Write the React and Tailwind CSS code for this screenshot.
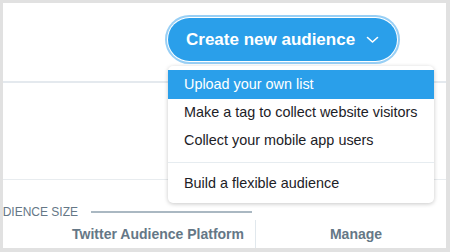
import React from 'react';

const menuItems = [
  { label: 'Upload your own list', active: true },
  { label: 'Make a tag to collect website visitors' },
  { label: 'Collect your mobile app users' },
];

const App = () => {
  return (
    <div className="w-[450px] h-[252px] bg-[#e1e1e1] pt-[3px] pl-[3px] pr-[4px] pb-[4px] font-['Liberation_Sans',Arial,sans-serif]">
      <div className="relative w-full h-full bg-white overflow-hidden flex flex-col">
        {/* Top bar with the button */}
        <div className="h-[80px] shrink-0 border-b-2 border-[#e4e9ee] pl-[165px] pt-[15px]">
          <button className="w-[229px] h-[43px] rounded-full bg-[#2a9fea] ring-2 ring-[#98cff5] ring-offset-1 ring-offset-white flex items-center pl-[18px] text-white text-[17px] font-bold">
            Create new audience
            <svg className="ml-[11px]" width="13" height="8" viewBox="0 0 13 8" fill="none">
              <path d="M1.5 1.5 L6.5 6 L11.5 1.5" stroke="white" strokeWidth="1.6" strokeLinecap="round" strokeLinejoin="round" />
            </svg>
          </button>
        </div>

        <div className="h-[97px] shrink-0 border-b border-[#e8ecef]" />

        {/* Audience size label */}
        <div className="flex items-center pt-[23px] h-[40px] shrink-0">
          <span className="-ml-[17px] text-[12px] text-[#657786] leading-none">AUDIENCE SIZE</span>
          <div className="ml-[13px] w-[161px] h-[2px] bg-[#aab8c2]" />
        </div>

        {/* Table header row */}
        <div className="flex h-[28px] shrink-0 text-[14px] font-bold text-[#657786]">
          <div className="w-[253px] flex items-center justify-end pr-[11px] border-r border-[#e1e8ed]">
            Twitter Audience Platform
          </div>
          <div className="flex-1 flex items-center justify-center pl-[10px]">Manage</div>
        </div>

        {/* Dropdown menu */}
        <div className="absolute left-[165px] top-[63px] w-[266px] bg-white rounded-[5px] shadow-[0_1px_4px_rgba(0,0,0,0.22)] pt-[4px] pb-[5px] text-[14.4px] text-[#1c2126]">
          {menuItems.map((item) => (
            <div
              key={item.label}
              className={
                item.active
                  ? 'h-[29px] flex items-center pl-[16px] bg-[#2a9fea] text-white'
                  : 'h-[28px] flex items-center pl-[16px]'
              }
            >
              {item.label}
            </div>
          ))}
          <div className="mt-[7px] mb-[7px] h-px bg-[#e6ecf0]" />
          <div className="h-[28px] flex items-center pl-[16px]">Build a flexible audience</div>
        </div>
      </div>
    </div>
  );
};

export default App;
